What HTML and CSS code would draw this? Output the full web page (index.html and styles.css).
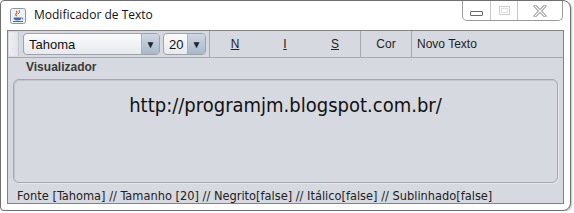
FILE: index.html
```html
<!DOCTYPE html>
<html lang="pt">
<head>
  <meta charset="UTF-8" />
  <title>Modificador de Texto</title>
  <link rel="stylesheet" href="styles.css">
</head>
<body>

  <div class="window">

    <!-- Title bar -->
    <div class="titlebar">
      <div class="app-icon">
        <svg width="16" height="16" viewBox="0 0 16 16">
          <rect x="0.5" y="0.5" width="15" height="15" rx="2" fill="#eef2f7" stroke="#8a96a6"/>
          <path d="M6 3 q2 1 0 3 q-1 1 1 2" fill="none" stroke="#d8641c" stroke-width="1.2"/>
          <path d="M9 2 q2 2 -1 4" fill="none" stroke="#d8641c" stroke-width="1"/>
          <path d="M3.5 9.5 h8 q0 3 -4 3 q-4 0 -4 -3z" fill="#3b6fb0"/>
          <path d="M11.5 10 q2 0 1 1.5" fill="none" stroke="#3b6fb0" stroke-width="1"/>
          <path d="M3 13.5 h10" stroke="#3b6fb0" stroke-width="1"/>
        </svg>
      </div>
      <span class="title">Modificador de Texto</span>
      <div class="controls">
        <div class="ctl ctl-min"><span class="min-bar"></span></div>
        <div class="ctl ctl-max"><span class="max-box"></span></div>
        <div class="ctl ctl-close">
          <svg width="14" height="12" viewBox="0 0 14 12">
            <path d="M2 1 L12 11 M12 1 L2 11" stroke="#8c8c8c" stroke-width="3" stroke-linecap="round"/>
            <path d="M2 1 L12 11 M12 1 L2 11" stroke="#ffffff" stroke-width="1.2" stroke-linecap="round"/>
          </svg>
        </div>
      </div>
    </div>

    <!-- Client area -->
    <div class="client">

      <div class="toolbar">
        <div class="grip"></div>
        <div class="combo combo-font">
          <span class="combo-value">Tahoma</span>
          <span class="combo-arrow">&#9660;</span>
        </div>
        <div class="combo combo-size">
          <span class="combo-value">20</span>
          <span class="combo-arrow">&#9660;</span>
        </div>
        <div class="sep"></div>
        <div class="tool tool-style"><u>N</u></div>
        <div class="tool tool-style"><u>I</u></div>
        <div class="tool tool-style"><u>S</u></div>
        <div class="sep"></div>
        <div class="tool tool-cor">Cor</div>
        <div class="sep"></div>
        <div class="tool tool-novo">Novo Texto</div>
      </div>

      <div class="group">
        <div class="group-label">Visualizador</div>
        <div class="preview">http://programjm.blogspot.com.br/</div>
      </div>

      <div class="status">Fonte [Tahoma] // Tamanho [20] // Negrito[false] // Itálico[false] // Sublinhado[false]</div>

    </div>
  </div>

</body>
</html>
```

FILE: styles.css
```css
body {
  margin: 0;
  background-color: #ffffff;
  font-family: 'Liberation Sans', Arial, sans-serif;
  color: #222;
}

.window {
  width: 571px;
  height: 211px;
  box-sizing: border-box;
  border: 1px solid #6f6f6f;
  border-radius: 4px 8px 8px 4px;
  background-color: #ffffff;
  padding: 0 6px 6px 6px;
  display: flex;
  flex-direction: column;
  box-shadow: 1px 1px 2px rgba(0,0,0,0.25);
}

/* Title bar */
.titlebar {
  height: 29px;
  flex-shrink: 0;
  display: flex;
  align-items: flex-start;
}

.app-icon {
  margin: 7px 0 0 3px;
  width: 16px;
  height: 16px;
}

.title {
  margin: 5px 0 0 8px;
  font-family: 'Open Sans', 'Noto Sans', sans-serif;
  font-size: 12px;
  color: #111;
}

.controls {
  margin-left: auto;
  margin-right: 1px;
  display: flex;
  height: 19px;
  border: 1px solid #9a9a9a;
  border-top: none;
  border-radius: 0 0 5px 5px;
}

.ctl {
  display: flex;
  align-items: center;
  justify-content: center;
}

.ctl-min {
  width: 27px;
  border-right: 1px solid #c8c8c8;
}

.min-bar {
  width: 11px;
  height: 3px;
  border: 1px solid #6a6a6a;
  border-radius: 1px;
  margin-top: 6px;
}

.ctl-max {
  width: 26px;
  border-right: 1px solid #c8c8c8;
}

.max-box {
  width: 9px;
  height: 7px;
  border: 1px solid #cfcfcf;
  box-shadow: inset 0 0 0 1px #ffffff, inset 0 0 0 2px #e0e0e0;
}

.ctl-close {
  width: 44px;
}

/* Client area */
.client {
  flex: 1;
  border: 1px solid #838383;
  background-color: #d6d9df;
  display: flex;
  flex-direction: column;
}

.toolbar {
  height: 26px;
  flex-shrink: 0;
  display: flex;
  align-items: center;
  border-bottom: 1px solid #a7abb1;
  font-size: 12px;
}

.grip {
  width: 9px;
  align-self: stretch;
  margin: 1px 4px 1px 1px;
  background: linear-gradient(to right, #eef0f3, #dfe2e7);
  border-right: 1px solid #c2c6cc;
  border-radius: 2px 0 0 2px;
}

.combo {
  height: 22px;
  box-sizing: border-box;
  border: 1px solid #9da3ab;
  border-radius: 4px;
  background: linear-gradient(#fbfbfc, #e7e9ed);
  display: flex;
  align-items: center;
  margin-right: 3px;
  overflow: hidden;
}

.combo-font {
  width: 137px;
}

.combo-size {
  width: 43px;
}

.combo-value {
  flex: 1;
  padding-left: 5px;
  font-size: 13px;
  color: #111;
}

.combo-arrow {
  width: 17px;
  align-self: stretch;
  display: flex;
  align-items: center;
  justify-content: center;
  border-left: 1px solid #a8b2be;
  background: linear-gradient(#cfd8e2, #a9b8c8);
  font-size: 10px;
  color: #1a2430;
}

.sep {
  width: 1px;
  align-self: stretch;
  background-color: #a7abb1;
}

.tool {
  display: flex;
  align-items: center;
  justify-content: center;
  color: #222;
}

.tool-style {
  width: 50px;
}

.tool-cor {
  width: 50px;
}

.tool-novo {
  padding-left: 5px;
}

/* Preview group */
.group {
  padding: 2px 5px 0 5px;
  display: flex;
  flex-direction: column;
}

.group-label {
  margin-left: 13px;
  font-size: 12px;
  font-weight: bold;
  color: #3a3a3a;
  line-height: 14px;
}

.preview {
  margin-top: 5px;
  height: 104px;
  box-sizing: border-box;
  border: 1px solid #a4a8ad;
  border-radius: 6px;
  box-shadow: inset 1px 1px 0 #c4c8ce, 1px 1px 0 #e6e8ec;
  display: flex;
  justify-content: center;
  padding-top: 13px;
  font-family: 'DejaVu Sans Condensed', 'DejaVu Sans', sans-serif;
  font-size: 20px;
  color: #111;
}

.status {
  flex: 1;
  padding: 4px 0 0 9px;
  display: flex;
  align-items: center;
  font-family: 'DejaVu Sans Condensed', 'DejaVu Sans', sans-serif;
  font-size: 12.7px;
  color: #222;
}
```
